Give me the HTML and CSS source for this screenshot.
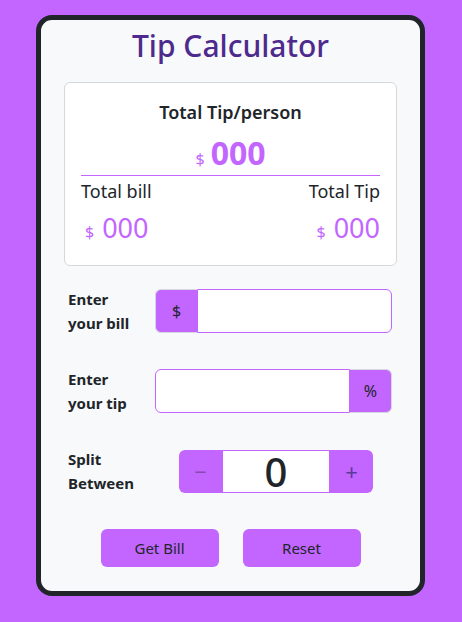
FILE: index.html
```html
<!DOCTYPE html>
<html>
<head>
<meta charset="utf-8">
<link rel="stylesheet" href="styles.css">
</head>
<body>
<div class="card">
  <h1 class="title">Tip Calculator</h1>
  <div class="summary">
    <div class="per-label">Total Tip/person</div>
    <div class="per-value"><span class="cur">$</span> <span class="big">000</span></div>
    <div class="rule"></div>
    <div class="totals">
      <div class="col">
        <div class="t-label">Total bill</div>
        <div class="t-value"><span class="cur">$</span><span class="mid">000</span></div>
      </div>
      <div class="col right">
        <div class="t-label">Total Tip</div>
        <div class="t-value"><span class="cur">$</span><span class="mid">000</span></div>
      </div>
    </div>
  </div>

  <div class="row bill-row">
    <div class="lbl">Enter<br>your bill</div>
    <div class="group">
      <span class="addon left">$</span>
      <input class="field" type="text">
    </div>
  </div>

  <div class="row tip-row">
    <div class="lbl">Enter<br>your tip</div>
    <div class="group">
      <input class="field fleft" type="text">
      <span class="addon right">%</span>
    </div>
  </div>

  <div class="row split-row">
    <div class="lbl">Split<br>Between</div>
    <div class="stepper">
      <button class="step minus">&minus;</button>
      <div class="count">0</div>
      <button class="step plus">+</button>
    </div>
  </div>

  <div class="actions">
    <button class="btn">Get Bill</button>
    <button class="btn">Reset</button>
  </div>
</div>
</body>
</html>
```

FILE: styles.css
```css
* { box-sizing: border-box; }
html, body { margin: 0; padding: 0; }
body {
  background: #c266ff;
  height: 622px;
  font-family: "Noto Sans", "Open Sans", sans-serif;
  color: #212529;
  padding-top: 15px;
}
.card {
  width: 389px;
  height: 581px;
  margin-left: 36px;
  border: 5px solid #212529;
  border-radius: 16px;
  background: #f8f9fa;
  padding: 0 23px;
}
.title {
  margin: 7px 0 0;
  text-align: center;
  font-size: 30px;
  line-height: 38px;
  font-weight: 500;
  color: #4e2a8e;
}
.summary {
  margin-top: 17px;
  height: 184px;
  background: #fff;
  border: 1px solid #d6d8db;
  border-radius: 6px;
  padding: 14px 16px 0;
}
.per-label {
  text-align: center;
  font-size: 18px;
  font-weight: 600;
  line-height: 30px;
}
.per-value {
  text-align: center;
  line-height: 44px;
  height: 48px;
  color: #c266ff;
  padding-top: 4px;
}
.per-value .cur { margin-right: 2px; }
.cur { font-size: 16px; }
.big { font-size: 32px; font-weight: 700; }
.rule {
  height: 1px;
  background: #c266ff;
}
.totals {
  display: flex;
  justify-content: space-between;
}
.col.right { text-align: right; }
.t-label {
  font-size: 18px;
  line-height: 30px;
}
.t-value {
  color: #c266ff;
  line-height: 44px;
  padding-left: 4px;
}
.t-value .cur { margin-right: 8px; }
.mid { font-size: 27px; }
.row {
  display: grid;
  grid-template-columns: 87px minmax(0, 1fr);
  align-items: center;
  padding: 0 5px 0 4px;
}
.bill-row { margin-top: 21px; }
.tip-row { margin-top: 32px; }
.split-row { margin-top: 32px; }
.lbl {
  font-size: 15px;
  font-weight: 700;
  line-height: 24px;
}
.group {
  display: flex;
  height: 44px;
  min-width: 0;
}
.addon {
  flex: 0 0 42px;
  display: flex;
  align-items: center;
  justify-content: center;
  background: #c266ff;
  border: 1px solid #d6d8db;
  font-size: 16px;
}
.addon.left { border-radius: 6px 0 0 6px; border-right: none; }
.addon.right { border-radius: 0 6px 6px 0; border-left: none; }
.field {
  flex: 1 1 0;
  width: 0;
  min-width: 0;
  height: 44px;
  border: 1px solid #c266ff;
  border-radius: 0 6px 6px 0;
  background: #fff;
  outline: none;
  font: inherit;
}
.field.fleft { border-radius: 6px 0 0 6px; }
.stepper {
  display: flex;
  width: 194px;
  height: 43px;
  margin-left: 24px;
}
.step {
  width: 43px;
  border: none;
  background: #c266ff;
  font-family: inherit;
  font-size: 22px;
  padding: 0;
}
.minus { border-radius: 6px 0 0 6px; color: #8b49b5; }
.plus { border-radius: 0 6px 6px 0; color: #5a3a9a; }
.count {
  flex: 1;
  background: #fff;
  border: 1px solid #c266ff;
  display: flex;
  align-items: center;
  justify-content: center;
  font-size: 40px;
  font-weight: 500;
  line-height: 1;
  padding-top: 2px;
}
.actions {
  display: flex;
  justify-content: center;
  gap: 24px;
  margin-top: 34px;
}
.btn {
  width: 118px;
  height: 38px;
  border: none;
  border-radius: 6px;
  background: #c266ff;
  font-family: inherit;
  font-size: 15px;
  color: #212529;
}
```
